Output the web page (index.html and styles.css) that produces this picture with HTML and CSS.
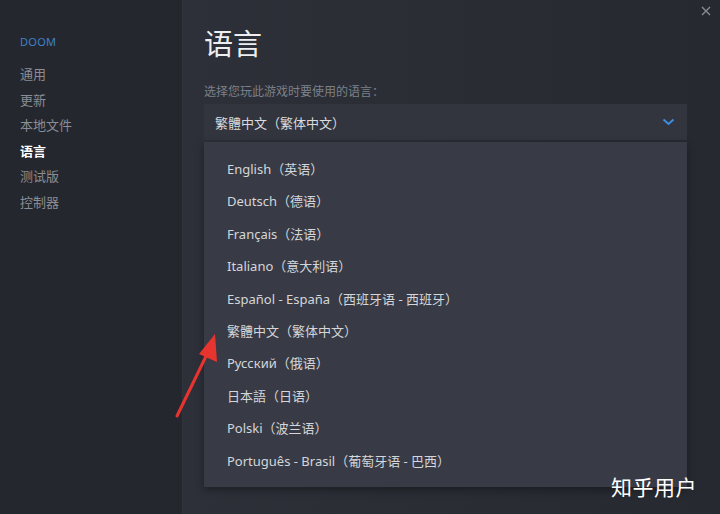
FILE: index.html
```html
<!DOCTYPE html>
<html>
<head>
  <title>DOOM - 属性</title>
  <link rel="stylesheet" href="styles.css">
</head>
<body>
  <div class="window">
    <nav class="sidebar">
      <div class="game-title">DOOM</div>
      <a class="nav-item">通用</a>
      <a class="nav-item">更新</a>
      <a class="nav-item">本地文件</a>
      <a class="nav-item active">语言</a>
      <a class="nav-item">测试版</a>
      <a class="nav-item">控制器</a>
    </nav>

    <main class="content">
      <button class="close-btn" aria-label="关闭">
        <svg width="10" height="10" viewBox="0 0 10 10"><path d="M1 1L9 9M9 1L1 9" stroke="#8b8e95" stroke-width="1.3"/></svg>
      </button>
      <h1 class="page-title">语言</h1>
      <div class="field-label">选择您玩此游戏时要使用的语言：</div>

      <div class="select">
        <span>繁體中文（繁体中文）</span>
        <svg class="chevron" width="13" height="8" viewBox="0 0 13 8"><path d="M1.5 1.5L6.5 6L11.5 1.5" fill="none" stroke="#3d8ee0" stroke-width="2"/></svg>
      </div>

      <ul class="options">
        <li>English（英语）</li>
        <li>Deutsch（德语）</li>
        <li>Français（法语）</li>
        <li>Italiano（意大利语）</li>
        <li>Español - España（西班牙语 - 西班牙）</li>
        <li>繁體中文（繁体中文）</li>
        <li>Русский（俄语）</li>
        <li>日本語（日语）</li>
        <li>Polski（波兰语）</li>
        <li>Português - Brasil（葡萄牙语 - 巴西）</li>
      </ul>
    </main>
  </div>

  <!-- red pointer arrow drawn over the list -->
  <svg class="pointer" width="60" height="90" viewBox="0 0 60 90">
    <path d="M4 86L36 20" stroke="#e8342f" stroke-width="3" stroke-linecap="round"/>
    <path d="M42 4L44 32L26 24Z" fill="#e8342f"/>
  </svg>

  <div class="watermark">知乎用户</div>
</body>
</html>
```

FILE: styles.css
```css
body {
  margin: 0;
  width: 720px;
  height: 514px;
  overflow: hidden;
  background-color: #23262c;
  font-family: "Noto Sans", "Noto Sans CJK SC", sans-serif;
}

.window {
  display: flex;
  height: 514px;
}

.sidebar {
  width: 182px;
  flex-shrink: 0;
  background-color: #24272e;
  padding: 34px 0 0 20px;
  box-sizing: border-box;
  display: flex;
  flex-direction: column;
}

.game-title {
  color: #3f82c8;
  font-size: 11px;
  letter-spacing: 0.3px;
  margin-bottom: 13px;
}

.nav-item {
  color: #8a8d94;
  font-size: 13px;
  line-height: 25.6px;
}

.nav-item.active {
  color: #ffffff;
  font-weight: bold;
}

.content {
  flex: 1;
  position: relative;
  padding: 23px 33px 0 21px;
  background: linear-gradient(to right, #2d3038 0%, #292c33 60%, #262930 100%);
  border-left: 1px solid #30333b;
}

.close-btn {
  position: absolute;
  top: 4px;
  right: 9px;
  background: none;
  border: none;
  padding: 0;
  cursor: pointer;
}

.page-title {
  margin: 0;
  color: #eceef0;
  font-size: 29px;
  font-weight: normal;
  line-height: 42px;
}

.field-label {
  margin-top: 18px;
  color: #7d8089;
  font-size: 12px;
  line-height: 18px;
}

.select {
  margin-top: 3px;
  height: 36px;
  background-color: #32353e;
  display: flex;
  align-items: center;
  justify-content: space-between;
  padding: 0 11px;
  color: #d9dbde;
  font-size: 13px;
}

.chevron {
  margin-right: 1px;
}

.options {
  list-style: none;
  margin: 2px 0 0;
  padding: 11px 0 10px;
  background-color: #383b45;
  box-shadow: 0 3px 8px rgba(0, 0, 0, 0.35);
}

.options li {
  height: 32.4px;
  line-height: 32.4px;
  padding-left: 23px;
  color: #d4d6da;
  font-size: 13px;
}

.pointer {
  position: absolute;
  left: 173px;
  top: 330px;
}

.watermark {
  position: absolute;
  left: 611px;
  top: 471px;
  color: #ffffff;
  font-size: 21px;
  letter-spacing: 0.5px;
}
```
